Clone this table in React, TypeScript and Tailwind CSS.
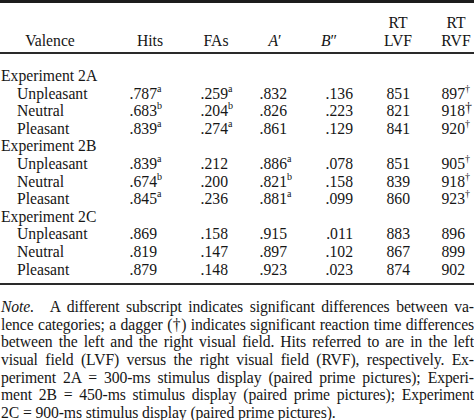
import React from 'react';

type Cell = [string, string?];

interface Group {
  name: string;
  rows: { label: string; cells: Cell[] }[];
}

const groups: Group[] = [
  {
    name: 'Experiment 2A',
    rows: [
      { label: 'Unpleasant', cells: [['.787', 'a'], ['.259', 'a'], ['.832'], ['.136'], ['851'], ['897', '†']] },
      { label: 'Neutral', cells: [['.683', 'b'], ['.204', 'b'], ['.826'], ['.223'], ['821'], ['918', '‡']] },
      { label: 'Pleasant', cells: [['.839', 'a'], ['.274', 'a'], ['.861'], ['.129'], ['841'], ['920', '†']] },
    ],
  },
  {
    name: 'Experiment 2B',
    rows: [
      { label: 'Unpleasant', cells: [['.839', 'a'], ['.212'], ['.886', 'a'], ['.078'], ['851'], ['905', '†']] },
      { label: 'Neutral', cells: [['.674', 'b'], ['.200'], ['.821', 'b'], ['.158'], ['839'], ['918', '†']] },
      { label: 'Pleasant', cells: [['.845', 'a'], ['.236'], ['.881', 'a'], ['.099'], ['860'], ['923', '†']] },
    ],
  },
  {
    name: 'Experiment 2C',
    rows: [
      { label: 'Unpleasant', cells: [['.869'], ['.158'], ['.915'], ['.011'], ['883'], ['896']] },
      { label: 'Neutral', cells: [['.819'], ['.147'], ['.897'], ['.102'], ['867'], ['899']] },
      { label: 'Pleasant', cells: [['.879'], ['.148'], ['.923'], ['.023'], ['874'], ['902']] },
    ],
  },
];

// right padding per data column so the figures line up like the print
const pads = ['pr-[23px]', 'pr-[24px]', 'pr-[11px]', 'pr-[7px]', 'pr-[26px]', 'pr-[9px]'];

const cols = 'grid grid-cols-[120px_60px_72px_46px_62px_76px_38px]';

function Num({ value, mark }: { value: string; mark?: string }) {
  return (
    <span className="relative">
      {value}
      {mark === '‡' ? (
        <span className="absolute left-full top-[-1px] text-[14px] leading-none">†</span>
      ) : mark ? (
        <span className="absolute left-full top-[-1px] text-[10px] leading-none">{mark}</span>
      ) : null}
    </span>
  );
}

const noteLines = [
  'A different subscript indicates significant differences between va-',
  'lence categories; a dagger (†) indicates significant reaction time differences',
  'between the left and the right visual field. Hits referred to are in the left',
  'visual field (LVF) versus the right visual field (RVF), respectively. Ex-',
  'periment 2A = 300-ms stimulus display (paired prime pictures); Experi-',
  'ment 2B = 450-ms stimulus display (paired prime pictures); Experiment',
];

export default function App() {
  return (
    <div
      className="w-[474px] h-[420px] overflow-hidden bg-white text-[#161616] text-[15.7px] leading-[17.6px]"
      style={{ fontFamily: '"Liberation Serif", "Times New Roman", serif' }}
    >
      <div className="h-[3px] bg-[#1c1c1c]" />

      {/* header */}
      <div className={`${cols} pt-[11px] pb-[2px] leading-[18px] border-b-2 border-[#2a2a2a]`}>
        <div className="flex items-end justify-center pr-[20px]">Valence</div>
        <div className="flex items-end justify-center">Hits</div>
        <div className="flex items-end justify-center">FAs</div>
        <div className="flex items-end justify-center">
          <span><i>A</i>′</span>
        </div>
        <div className="flex items-end justify-center">
          <span><i>B</i>″</span>
        </div>
        <div className="flex flex-col items-center justify-end">
          <span>RT</span>
          <span>LVF</span>
        </div>
        <div className="flex flex-col items-center justify-end pl-[2px]">
          <span>RT</span>
          <span>RVF</span>
        </div>
      </div>

      {/* body */}
      <div className="pt-[13px] pb-[5px] border-b-2 border-[#2a2a2a]">
        {groups.map((g) => (
          <div key={g.name}>
            <div className="h-[17.6px] pl-[1px]">{g.name}</div>
            {g.rows.map((r) => (
              <div key={r.label} className={`${cols} h-[17.6px]`}>
                <div className="pl-[17px]">{r.label}</div>
                {r.cells.map((c, i) => (
                  <div key={i} className={`text-right ${pads[i]}`}>
                    <Num value={c[0]} mark={c[1]} />
                  </div>
                ))}
              </div>
            ))}
          </div>
        ))}
      </div>

      {/* note */}
      <div className="mt-[13px] tracking-[-0.1px]">
        {noteLines.map((line, i) => (
          <div key={i} className="text-justify [text-align-last:justify] pl-[1px]">
            {i === 0 ? (
              <>
                <i className="mr-[10px]">Note.</i> {line}
              </>
            ) : (
              line
            )}
          </div>
        ))}
        <div className="pl-[1px]">2C = 900-ms stimulus display (paired prime pictures).</div>
      </div>
    </div>
  );
}
